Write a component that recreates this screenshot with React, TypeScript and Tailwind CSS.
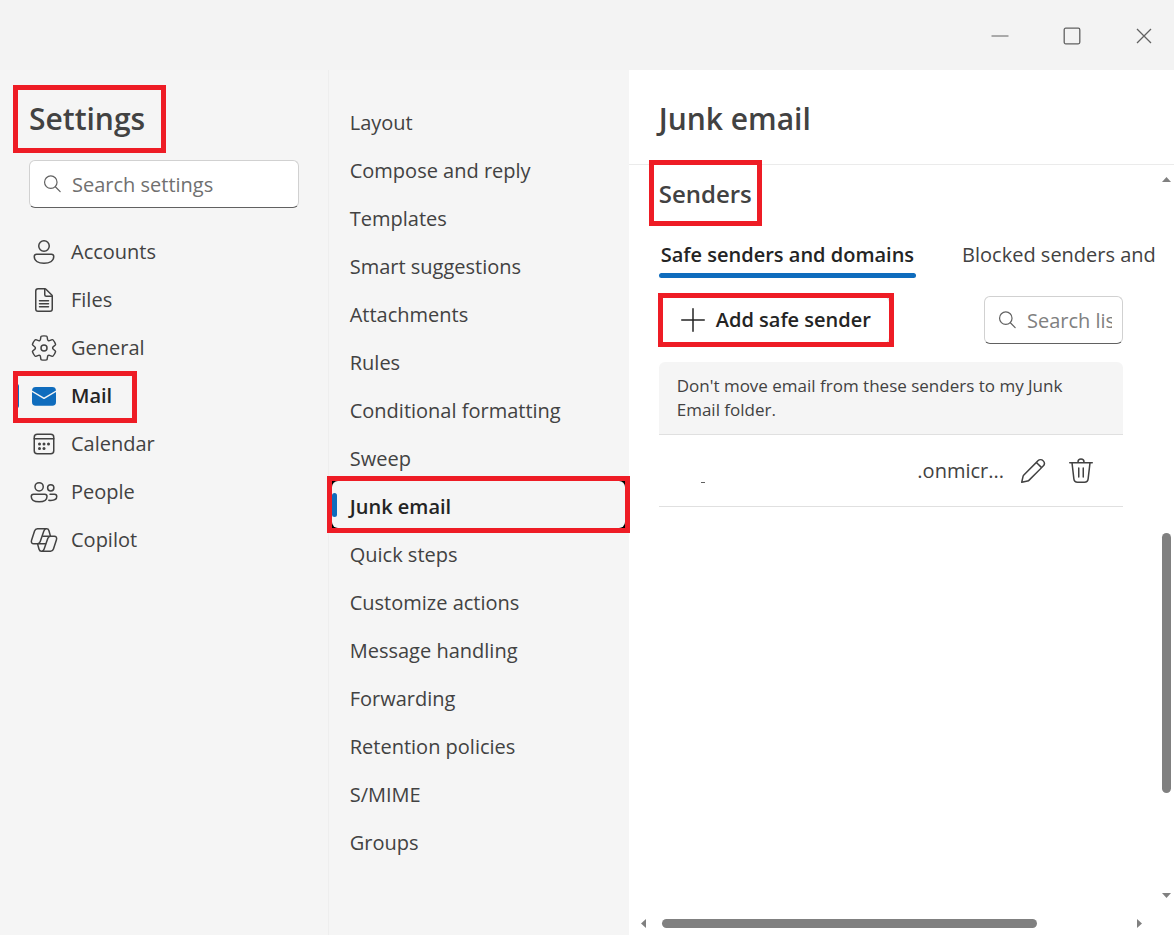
import type { ReactNode } from 'react';
import clsx from 'clsx';

function Icon({ children, className = 'size-[30px]' }: { children: ReactNode; className?: string }) {
  return (
    <svg viewBox="0 0 20 20" fill="none" className={clsx('shrink-0', className)} aria-hidden="true">
      {children}
    </svg>
  );
}

const stroke = { stroke: 'currentColor', strokeLinecap: 'round', strokeLinejoin: 'round' } as const;

function SearchIcon() {
  return (
    <Icon className="size-6 text-[#616161]">
      <g {...stroke}>
        <circle cx="9" cy="8.5" r="5.2" />
        <path d="m12.8 12.3 4 4" />
      </g>
    </Icon>
  );
}

const categories = [
  {
    label: 'Accounts',
    icon: (
      <Icon>
        <g {...stroke}>
          <circle cx="10" cy="6" r="3.5" />
          <path d="M5 11.5h10c.83 0 1.5.67 1.5 1.5 0 3-2.9 4.5-6.5 4.5S3.5 16 3.5 13c0-.83.67-1.5 1.5-1.5Z" />
        </g>
      </Icon>
    ),
  },
  {
    label: 'Files',
    icon: (
      <Icon>
        <g {...stroke}>
          <path d="M6 2.5h4.6c.26 0 .5.1.7.3l3.9 3.9c.2.2.3.45.3.7V16c0 .83-.67 1.5-1.5 1.5H6A1.5 1.5 0 0 1 4.5 16V4c0-.83.67-1.5 1.5-1.5Z" />
          <path d="M10.5 2.7v3.8c0 .55.45 1 1 1h3.8M7 10.5h6M7 12.5h6M7 14.5h6" />
        </g>
      </Icon>
    ),
  },
  {
    label: 'General',
    icon: (
      <Icon>
        <g {...stroke}>
          <path d="M1.91 7.38A8.5 8.5 0 0 1 3.7 4.3a.5.5 0 0 1 .54-.13l1.92.68a1 1 0 0 0 1.32-.76l.36-2a.5.5 0 0 1 .4-.4 8.53 8.53 0 0 1 3.55 0c.2.04.35.2.38.4l.37 2a1 1 0 0 0 1.32.76l1.92-.68a.5.5 0 0 1 .54.13 8.5 8.5 0 0 1 1.78 3.08c.06.2 0 .4-.15.54l-1.56 1.32a1 1 0 0 0 0 1.52l1.56 1.32a.5.5 0 0 1 .15.54 8.5 8.5 0 0 1-1.78 3.08.5.5 0 0 1-.54.13l-1.92-.68a1 1 0 0 0-1.32.76l-.37 2a.5.5 0 0 1-.38.4 8.53 8.53 0 0 1-3.56 0 .5.5 0 0 1-.39-.4l-.36-2a1 1 0 0 0-1.32-.76l-1.92.68a.5.5 0 0 1-.54-.13 8.5 8.5 0 0 1-1.78-3.08.5.5 0 0 1 .15-.54l1.56-1.32a1 1 0 0 0 0-1.52L2.06 7.92a.5.5 0 0 1-.15-.54Z" transform="translate(.5 .5) scale(.95)" />
          <circle cx="10" cy="10" r="2" />
        </g>
      </Icon>
    ),
  },
  {
    label: 'Mail',
    icon: (
      <Icon className="size-[30px] text-[#0f6cbd]">
        <path
          fill="currentColor"
          d="M18 7.37v6.63a2.5 2.5 0 0 1-2.5 2.5h-11A2.5 2.5 0 0 1 2 14V7.37l7.75 4.56c.16.09.35.09.5 0L18 7.37ZM15.5 4a2.5 2.5 0 0 1 2.49 2.3L10 11 2.01 6.3A2.5 2.5 0 0 1 4.5 4h11Z"
        />
      </Icon>
    ),
  },
  {
    label: 'Calendar',
    icon: (
      <Icon>
        <g {...stroke}>
          <rect x="3.5" y="3.5" width="13" height="13" rx="2" />
          <path d="M3.5 6.5h13" />
        </g>
        <g fill="currentColor">
          <circle cx="7" cy="10" r="1" />
          <circle cx="10" cy="10" r="1" />
          <circle cx="13" cy="10" r="1" />
          <circle cx="7" cy="13" r="1" />
          <circle cx="10" cy="13" r="1" />
        </g>
      </Icon>
    ),
  },
  {
    label: 'People',
    icon: (
      <Icon>
        <g {...stroke}>
          <circle cx="6.75" cy="6.5" r="2.75" />
          <circle cx="14.5" cy="7.2" r="2.1" />
          <path d="M3 11.5h7.5c.83 0 1.5.67 1.5 1.5 0 2.5-2.3 3.5-5.25 3.5S1.5 15.5 1.5 13c0-.83.67-1.5 1.5-1.5Z" />
          <path d="M14 11.5h3c.83 0 1.5.67 1.5 1.5 0 1.9-1.7 2.6-4 2.6-.5 0-.9 0-1.3-.1" />
        </g>
      </Icon>
    ),
  },
  {
    label: 'Copilot',
    icon: (
      <Icon>
        <g {...stroke}>
          <path d="M14.3 7.4l-1-3.6c-.25-.85-.7-1.3-1.5-1.3H5.6c-1 0-1.6.6-1.9 1.5l-2 6.2c-.45 1.4.2 2.3 1.5 2.3h2.5c1 0 1.5-.6 1.8-1.5L9.9 4c.3-.9.8-1.5 1.7-1.5" />
          <path d="M5.7 12.6l1 3.6c.25.85.7 1.3 1.5 1.3h6.2c1 0 1.6-.6 1.9-1.5l2-6.2c.45-1.4-.2-2.3-1.5-2.3h-2.5c-1 0-1.5.6-1.8 1.5L10.1 16c-.3.9-.8 1.5-1.7 1.5" />
          <path d="M9.2 7.5h5M6 12.5h5" />
        </g>
      </Icon>
    ),
  },
];

const mailPages = [
  'Layout',
  'Compose and reply',
  'Templates',
  'Smart suggestions',
  'Attachments',
  'Rules',
  'Conditional formatting',
  'Sweep',
  'Junk email',
  'Quick steps',
  'Customize actions',
  'Message handling',
  'Forwarding',
  'Retention policies',
  'S/MIME',
  'Groups',
];

// Red frame drawn over the item it points out
function Highlight({ className }: { className: string }) {
  return <span className={clsx('pointer-events-none absolute z-10 border-5 border-[#ee1c25]', className)} />;
}

function TitleBar() {
  return (
    <header className="flex h-[70px] items-center justify-end bg-[#f3f3f3] pt-0.5 text-[#616161]">
      <button aria-label="Minimize" className="flex w-[72px] justify-center">
        <svg viewBox="0 0 18 18" className="size-[18px]"><path d="M.5 9h17" stroke="currentColor" /></svg>
      </button>
      <button aria-label="Maximize" className="flex w-[72px] justify-center">
        <svg viewBox="0 0 18 18" fill="none" className="size-[18px]">
          <rect x="1.2" y="1.2" width="15.6" height="15.6" rx="1.5" stroke="currentColor" strokeWidth="1.3" />
        </svg>
      </button>
      <button aria-label="Close" className="-mr-1.5 flex w-[72px] justify-center">
        <svg viewBox="0 0 18 18" className="size-[18px]"><path d="m2 2 14 14M16 2 2 16" stroke="currentColor" strokeWidth="1.3" /></svg>
      </button>
    </header>
  );
}

function Sidebar() {
  return (
    <aside className="w-[28%] shrink-0 border-r border-[#eeeeee] bg-[#f5f5f5] px-[29px] pt-7">
      <div className="relative w-fit">
        <h1 className="text-[30px] leading-[42px] font-semibold">Settings</h1>
        <Highlight className="-inset-y-[13px] -right-[21px] -left-4" />
      </div>
      <label className="mt-5 flex h-12 items-center gap-2 rounded-md border border-[#d1d1d1] border-b-[#616161] bg-white px-2.5">
        <SearchIcon />
        <input
          type="text"
          aria-label="Search settings"
          placeholder="Search settings"
          className="w-full min-w-0 pt-0.5 outline-none placeholder:text-[#707070]"
        />
      </label>
      <nav className="mt-5">
        {categories.map(({ label, icon }) => {
          const active = label === 'Mail';
          return (
            <button key={label} className="relative flex h-12 w-full items-center gap-3 text-left">
              {active && (
                <>
                  <span className="absolute top-3 -left-3.5 h-6 w-1 rounded-full bg-[#0f6cbd]" />
                  <Highlight className="-top-px -left-4 h-[52px] w-[124px]" />
                </>
              )}
              {icon}
              <span className={clsx(active && 'font-semibold text-[#242424]')}>{label}</span>
            </button>
          );
        })}
      </nav>
    </aside>
  );
}

function PageList() {
  return (
    <nav className="w-[300px] shrink-0 bg-[#f5f5f5] pt-[29px]">
      {mailPages.map((page) => {
        const active = page === 'Junk email';
        return (
          <button key={page} className="relative flex h-12 w-full items-center pl-[21px] text-left">
            {active && (
              <>
                <span className="absolute -top-[7px] -right-px -bottom-0.5 -left-0.5 border-5 border-[#ee1c25] bg-black" />
                <span className="absolute -top-0.5 right-1 bottom-[3px] left-[3px] rounded-md bg-[#f5f5f5]" />
                <span className="absolute top-2.5 left-[3px] h-6 w-[5px] rounded-full bg-[#0f6cbd]" />
              </>
            )}
            <span className={clsx('relative', active && 'font-semibold text-[#242424]')}>{page}</span>
          </button>
        );
      })}
    </nav>
  );
}

function SafeSenders() {
  return (
    <div className="min-w-0 flex-1 pr-[35px] pb-6 pl-[30px]">
      <div className="relative mt-3 w-fit">
        <h3 className="text-2xl leading-[34px] font-semibold">Senders</h3>
        <Highlight className="-inset-x-2.5 -top-[17px] -bottom-[15px]" />
      </div>

      <div role="tablist" className="mt-[27px] -mr-6 flex h-10 gap-[46px] whitespace-nowrap">
        <button role="tab" aria-selected="true" className="flex flex-col items-center justify-between pt-[3px] font-semibold text-[#242424]">
          <span className="px-0.5">Safe senders and domains</span>
          <span className="h-[5px] w-full rounded-full bg-[#0f6cbd]" />
        </button>
        <button role="tab" aria-selected="false" className="flex items-start pt-[3px]">Blocked senders and</button>
      </div>

      <div className="mt-[18px] flex items-center justify-between gap-4">
        <button className="relative flex h-12 items-center gap-2 rounded-md border border-[#d1d1d1] px-[18px] font-semibold text-[#242424]">
          <Icon><path d="M10 2.5v15M2.5 10h15" {...stroke} /></Icon>
          Add safe sender
          <Highlight className="-inset-y-1 -right-[5px] -left-0.5" />
        </button>
        <label className="flex h-12 w-[139px] items-center gap-2 rounded-md border border-[#d1d1d1] border-b-[#616161] px-2.5">
          <SearchIcon />
          <input
            type="text"
            aria-label="Search list"
            placeholder="Search list"
            className="w-full min-w-0 pt-0.5 outline-none placeholder:text-[#808080]"
          />
        </label>
      </div>

      <p className="mt-[18px] rounded-t-md border-b border-[#e0e0e0] bg-[#f5f5f5] py-3 pr-10 pl-[18px] text-[17px] leading-6">
        Don't move email from these senders to my Junk Email folder.
      </p>
      <div className="flex h-[72px] items-center border-b border-[#e0e0e0] pr-[27px]">
        <span className="mt-6 ml-[42px] h-px w-1 bg-[#616161]" />
        <span className="ml-auto">.onmicr...</span>
        <button aria-label="Edit" className="ml-3.5">
          <Icon>
            <path
              fill="currentColor"
              d="M17.18 2.93a2.97 2.97 0 0 0-4.26-.06l-9.37 9.38c-.33.33-.56.74-.66 1.2l-.88 3.94a.5.5 0 0 0 .6.6l3.92-.88c.47-.1.9-.34 1.24-.68l9.36-9.36a2.97 2.97 0 0 0 .05-4.14Zm-3.55.65a1.97 1.97 0 1 1 2.8 2.8l-.68.66-2.8-2.79.68-.67Zm-1.38 1.38 2.8 2.8-7.99 7.97c-.2.2-.46.35-.74.41l-3.16.7.7-3.18c.07-.27.2-.51.4-.7l8-8Z"
            />
          </Icon>
        </button>
        <button aria-label="Delete" className="ml-[18px]">
          <Icon>
            <path
              fill="currentColor"
              d="M8.5 4h3a1.5 1.5 0 0 0-3 0Zm-1 0a2.5 2.5 0 0 1 5 0h5a.5.5 0 0 1 0 1h-1.05l-1.2 10.34A3 3 0 0 1 12.27 18H7.73a3 3 0 0 1-2.98-2.66L3.55 5H2.5a.5.5 0 0 1 0-1h5ZM5.74 15.23A2 2 0 0 0 7.73 17h4.54a2 2 0 0 0 1.99-1.77L15.44 5H4.56l1.18 10.23ZM8.5 7.5c.28 0 .5.22.5.5v6a.5.5 0 0 1-1 0V8c0-.28.22-.5.5-.5ZM12 8a.5.5 0 0 0-1 0v6a.5.5 0 0 0 1 0V8Z"
            />
          </Icon>
        </button>
      </div>
    </div>
  );
}

function Arrow({ className }: { className?: string }) {
  return (
    <svg viewBox="0 0 9 5" className={clsx('h-[5px] w-[9px] shrink-0 text-[#808080]', className)}>
      <path d="M0 5 4.5 0 9 5Z" fill="currentColor" />
    </svg>
  );
}

export default function App() {
  return (
    <div className="flex min-h-screen flex-col bg-white font-['Open_Sans','Noto_Sans',sans-serif] text-xl leading-7 text-[#424242]">
      <TitleBar />
      <div className="flex flex-1">
        <Sidebar />
        <PageList />
        <main className="flex min-w-0 flex-1 flex-col">
          <div className="border-b border-[#ebebeb] px-[30px] pt-7 pb-6">
            <h2 className="text-[30px] leading-[42px] font-semibold">Junk email</h2>
          </div>
          <div className="flex flex-1">
            <SafeSenders />
            <div className="flex w-4 shrink-0 flex-col items-center pt-3">
              <Arrow />
              <span className="flex-[351]" />
              <span className="w-[9px] flex-[260] rounded-full bg-[#808080]" />
              <span className="flex-[100]" />
              <Arrow className="rotate-180" />
            </div>
          </div>
          <div className="flex h-[37px] items-center pt-3.5 pr-[30px] pl-2.5">
            <Arrow className="-rotate-90" />
            <span className="flex-[14]" />
            <span className="h-[9px] flex-[374] rounded-full bg-[#808080]" />
            <span className="flex-[98]" />
            <Arrow className="rotate-90" />
          </div>
        </main>
      </div>
    </div>
  );
}
